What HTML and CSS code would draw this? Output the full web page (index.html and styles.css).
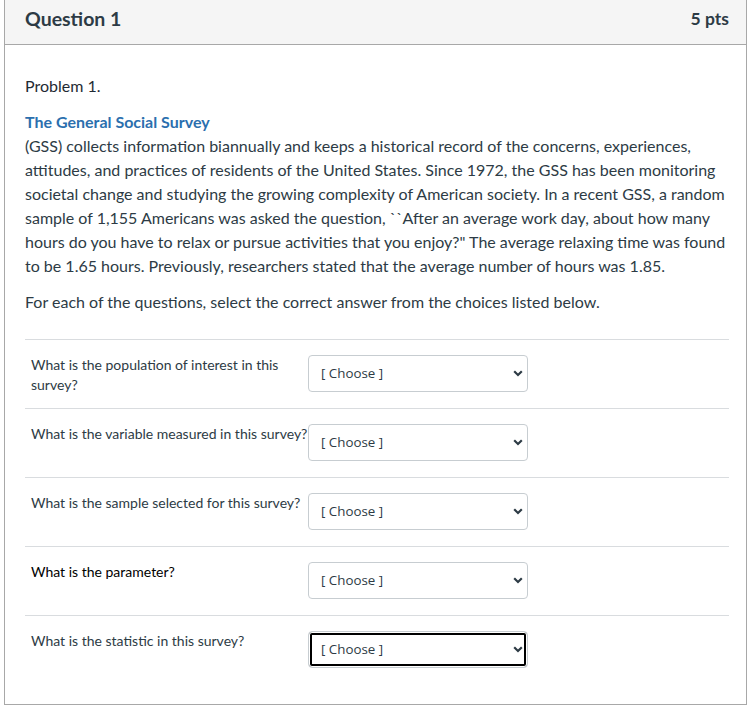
FILE: index.html
```html
<!DOCTYPE html>
<html lang="en">
<head>
<meta charset="utf-8">
<title>Question 1</title>
<link rel="stylesheet" href="styles.css">
</head>
<body>
<div class="question">
  <div class="header">
    <h2 class="title">Question 1</h2>
    <span class="pts">5 pts</span>
  </div>
  <div class="content">
    <p class="problem">Problem 1.</p>
    <p><strong class="survey-title">The General Social Survey</strong><br>(GSS) collects information biannually and keeps a historical record of the concerns, experiences, attitudes, and practices of residents of the United States. Since 1972, the GSS has been monitoring societal change and studying the growing complexity of American society. In a recent GSS, a random sample of 1,155 Americans was asked the question, ``After an average work day, about how many hours do you have to relax or pursue activities that you enjoy?" The average relaxing time was found to be 1.65 hours. Previously, researchers stated that the average number of hours was 1.85.</p>
    <p>For each of the questions, select the correct answer from the choices listed below.</p>
    <div class="rows">
      <div class="row">
        <div class="label">What is the population of interest in this survey?</div>
        <div class="select-wrap">
          <select class="select"><option>[ Choose ]</option></select>
          <svg class="chev" width="10" height="7" viewBox="0 0 10 7"><path d="M1.2 1.3 L5 5 L8.8 1.3" fill="none" stroke="#2d3b45" stroke-width="2.2"/></svg>
        </div>
      </div>
      <div class="row">
        <div class="label">What is the variable measured in this survey?</div>
        <div class="select-wrap">
          <select class="select"><option>[ Choose ]</option></select>
          <svg class="chev" width="10" height="7" viewBox="0 0 10 7"><path d="M1.2 1.3 L5 5 L8.8 1.3" fill="none" stroke="#2d3b45" stroke-width="2.2"/></svg>
        </div>
      </div>
      <div class="row">
        <div class="label">What is the sample selected for this survey?</div>
        <div class="select-wrap">
          <select class="select"><option>[ Choose ]</option></select>
          <svg class="chev" width="10" height="7" viewBox="0 0 10 7"><path d="M1.2 1.3 L5 5 L8.8 1.3" fill="none" stroke="#2d3b45" stroke-width="2.2"/></svg>
        </div>
      </div>
      <div class="row">
        <div class="label dark">What is the parameter?</div>
        <div class="select-wrap">
          <select class="select"><option>[ Choose ]</option></select>
          <svg class="chev" width="10" height="7" viewBox="0 0 10 7"><path d="M1.2 1.3 L5 5 L8.8 1.3" fill="none" stroke="#2d3b45" stroke-width="2.2"/></svg>
        </div>
      </div>
      <div class="row">
        <div class="label">What is the statistic in this survey?</div>
        <div class="select-wrap">
          <select class="select focused"><option>[ Choose ]</option></select>
          <svg class="chev" width="10" height="7" viewBox="0 0 10 7"><path d="M1.2 1.3 L5 5 L8.8 1.3" fill="none" stroke="#2d3b45" stroke-width="2.2"/></svg>
        </div>
      </div>
    </div>
  </div>
</div>
</body>
</html>
```

FILE: styles.css
```css
html, body {
  margin: 0;
  padding: 0;
  background: #fff;
}
body {
  font-family: Lato, "Liberation Sans", sans-serif;
  color: #2d3b45;
}
.question {
  margin-left: 4px;
  width: 741px;
  border: 1px solid #a8a8a8;
  border-top: none;
  padding-bottom: 20px;
}
.header {
  display: flex;
  justify-content: space-between;
  align-items: center;
  padding: 0 17px 0 20px;
  background: #f5f5f5;
  border-bottom: 1px solid #a8a8a8;
  box-sizing: border-box;
  height: 45px;
}
.title {
  margin: 0;
  font-size: 19.5px;
  font-weight: 700;
  line-height: 24px;
  padding-bottom: 6px;
}
.pts {
  font-size: 17.5px;
  font-weight: 700;
  line-height: 24px;
  padding-bottom: 6px;
}
.content {
  padding: 29px 17px 0 20px;
}
.content p {
  margin: 0 0 12px;
  font-size: 16px;
  line-height: 24px;
}
.problem {
  color: #1f2a33;
}
.survey-title {
  color: #2b6fae;
  font-weight: 700;
}
.rows {
  margin-top: 25px;
}
.row {
  display: flex;
  align-items: flex-start;
  border-top: 1px solid #d9dcdf;
  padding: 15px 0 16px;
  height: 69px;
  box-sizing: border-box;
}
.label {
  width: 277px;
  padding-left: 6px;
  font-size: 14px;
  line-height: 20px;
  flex: none;
}
.label.dark {
  color: #000;
}
.select-wrap {
  position: relative;
  width: 220px;
  height: 37px;
}
.select {
  appearance: none;
  -webkit-appearance: none;
  width: 100%;
  height: 100%;
  margin: 0;
  border: 1px solid #c7cdd1;
  border-radius: 4px;
  background: #fff;
  padding: 0 24px 2px 12px;
  font-family: "Open Sans", "Liberation Sans", sans-serif;
  font-size: 13.33px;
  color: #2d3b45;
  box-sizing: border-box;
  outline: none;
}
.select.focused {
  box-shadow: inset 0 0 0 1px #fff, inset 0 0 0 3px #000;
  border-radius: 4px;
}
.chev {
  position: absolute;
  right: 5px;
  top: 15px;
  pointer-events: none;
}
```
